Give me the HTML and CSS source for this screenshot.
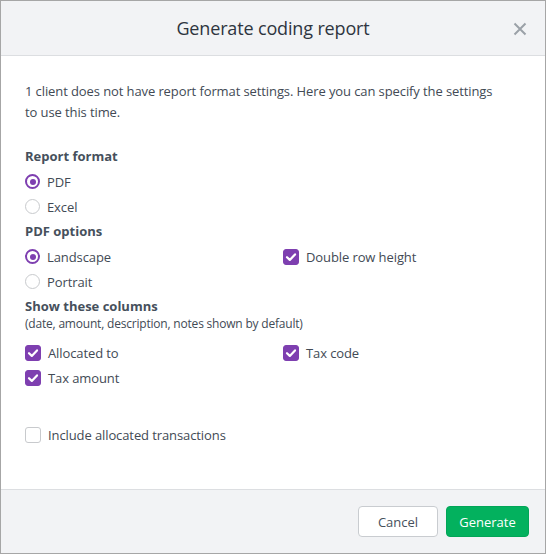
FILE: index.html
```html
<!DOCTYPE html>
<html>
<head>
<meta charset="utf-8">
<link rel="stylesheet" href="styles.css">
</head>
<body>
<div class="dialog">
  <div class="header">
    <h1 class="title">Generate coding report</h1>
    <span class="close"><svg width="14" height="14" viewBox="0 0 14 14"><path d="M1.5 1.5 L12.5 12.5 M12.5 1.5 L1.5 12.5" stroke="#9ba1a8" stroke-width="2" fill="none"/></svg></span>
  </div>
  <div class="body">
    <p class="intro">1 client does not have report format settings. Here you can specify the settings to use this time.</p>
    <div class="label">Report format</div>
    <div class="row"><span class="radio on"></span>PDF</div>
    <div class="row"><span class="radio"></span>Excel</div>
    <div class="label">PDF options</div>
    <div class="grid">
      <div class="row"><span class="radio on"></span>Landscape</div>
      <div class="row"><span class="check on"><svg width="12" height="12" viewBox="0 0 12 12"><path d="M2 6.2 L4.8 8.9 L10 3.4" stroke="#fff" stroke-width="2.2" fill="none" stroke-linecap="round" stroke-linejoin="round"/></svg></span>Double row height</div>
      <div class="row"><span class="radio"></span>Portrait</div>
    </div>
    <div class="label">Show these columns</div>
    <div class="hint">(date, amount, description, notes shown by default)</div>
    <div class="grid cols">
      <div class="row"><span class="check on"><svg width="12" height="12" viewBox="0 0 12 12"><path d="M2 6.2 L4.8 8.9 L10 3.4" stroke="#fff" stroke-width="2.2" fill="none" stroke-linecap="round" stroke-linejoin="round"/></svg></span>Allocated to</div>
      <div class="row"><span class="check on"><svg width="12" height="12" viewBox="0 0 12 12"><path d="M2 6.2 L4.8 8.9 L10 3.4" stroke="#fff" stroke-width="2.2" fill="none" stroke-linecap="round" stroke-linejoin="round"/></svg></span>Tax code</div>
      <div class="row"><span class="check on"><svg width="12" height="12" viewBox="0 0 12 12"><path d="M2 6.2 L4.8 8.9 L10 3.4" stroke="#fff" stroke-width="2.2" fill="none" stroke-linecap="round" stroke-linejoin="round"/></svg></span>Tax amount</div>
    </div>
    <div class="row include"><span class="check"></span>Include allocated transactions</div>
  </div>
  <div class="footer">
    <button class="btn cancel">Cancel</button>
    <button class="btn primary">Generate</button>
  </div>
</div>
</body>
</html>
```
FILE: styles.css
```css
* { box-sizing: border-box; }
html, body { margin: 0; padding: 0; background: #fff; }
body { font-family: "Open Sans", "Noto Sans", sans-serif; font-size: 13px; color: #424a55; }
.dialog {
  width: 546px; height: 554px;
  border: 1px solid #a6a6a6;
  display: flex; flex-direction: column;
  background: #fff;
}
.header {
  height: 55px;
  background: #f2f3f5;
  border-bottom: 1px solid #dcdee1;
  display: flex; align-items: center; justify-content: center;
  position: relative;
}
.title { margin: 0; font-size: 18px; font-weight: 400; color: #2e3540; letter-spacing: -0.15px; }
.close { position: absolute; right: 18px; top: 21px; display: flex; }
.body { flex: 1; padding: 25px 24px 0 24px; }
.intro { margin: 0 0 21px; padding-right: 20px; line-height: 21px; letter-spacing: -0.1px; }
.label { font-weight: 700; line-height: 25px; color: #46505c; letter-spacing: 0; }
.row { display: flex; align-items: center; height: 25px; gap: 7px; letter-spacing: -0.1px; }
.grid { display: grid; grid-template-columns: 258px 1fr; }
.hint { font-size: 12px; line-height: 16px; margin-top: -3px; letter-spacing: -0.2px; }
.cols { margin-top: 8px; }
.include { margin-top: 32px; }
.radio {
  width: 15px; height: 15px; border-radius: 50%;
  border: 1.5px solid #c8cacd; background: #fff; flex: none; position: relative;
}
.radio.on { border: 2px solid #7e3fb0; }
.radio.on::after {
  content: ""; position: absolute; left: 2.5px; top: 2.5px; width: 6px; height: 6px;
  border-radius: 50%; background: #7e3fb0;
}
.check {
  width: 16px; height: 16px; border-radius: 3px;
  border: 1.5px solid #c8cacd; background: #fff; flex: none;
  display: flex; align-items: center; justify-content: center;
}
.check.on { background: #7e3fb0; border-color: #7e3fb0; }
.footer {
  height: 64px;
  background: #f2f3f5;
  border-top: 1px solid #dcdee1;
  display: flex; align-items: center; justify-content: flex-end;
  gap: 8px; padding: 0 16px 0 0;
}
.btn {
  font-family: inherit; font-size: 13px; height: 31px; border-radius: 4px; cursor: pointer;
}
.cancel { width: 80px; background: #fff; border: 1px solid #c9ccd0; color: #46505c; }
.primary { width: 83px; background: #03b15e; border: 1px solid #02a557; color: #fff; }
```
